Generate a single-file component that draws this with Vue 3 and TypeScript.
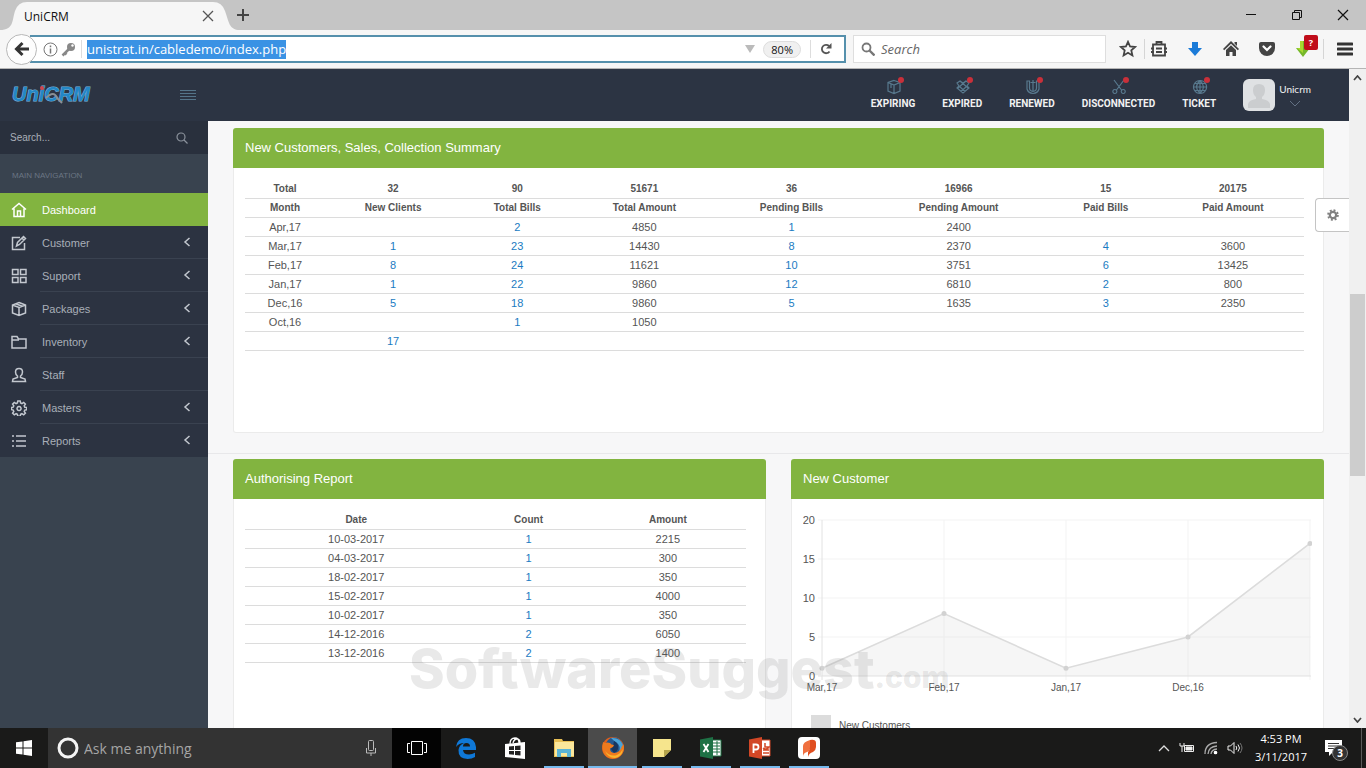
<script setup lang="ts">
import { ref } from 'vue'

interface NavItem { label: string; icon: string; children: boolean }
interface SummaryRow { month: string; cells: string[] }

const url = ref('unistrat.in/cabledemo/index.php')

const alerts = [
  { label: 'EXPIRING', icon: 'M8 1.5l6 2v8.5l-6 2.5-6-2.5V3.500zM2 3.500l6 2.500 6-2.500M8 6v8.500M5 5v4' },
  { label: 'EXPIRED', icon: 'M2 4l3-2 3 2 3-2 3 2-2 3 2 2-6 5-6-5 2-2zM5 2l8 7M11 2L3 9M4 7l6 5.500M12 7l-6 5.500' },
  { label: 'RENEWED', icon: 'M2 2h2.500v7q0 3 3.500 3.500 3.500-.5 3.500-3.500V2H14v8q-1 4-6 4.500-5-.5-6-4.500zM8 1v11.500M5.500 3.500h5' },
  { label: 'DISCONNECTED', icon: 'M3 1l7.500 10M13 1L5.500 11M3.800 10.500a2 2 0 1 0 .1 0zM12.200 10.500a2 2 0 1 0 .1 0z' },
  { label: 'TICKET', icon: 'M8 1.500a6.500 6.500 0 1 0 .1 0zM1.500 8h13M8 1.500v13M8 1.500q-7 6.500 0 13M8 1.500q7 6.500 0 13M3 4.500h10M3 11.500h10' },
]

const nav: NavItem[] = [
  { label: 'Customer', icon: 'M9 2.500H1.500v12h12V8M5.500 11l1-3.500L12.500 1.500l2 2-6 6zM11 3l2 2', children: true },
  { label: 'Support', icon: 'M1.500 1.500H7v5H1.500zM9.500 1.500H15v5H9.500zM1.500 9.500H7v5H1.500zM9.500 9.500H15v5H9.500z', children: true },
  { label: 'Packages', icon: 'M8 1.500l6.500 2.500v8L8 14.500 1.500 12V4zM1.500 4L8 6.500 14.500 4M8 6.500v8M4.700 2.700l6.500 2.600', children: true },
  { label: 'Inventory', icon: 'M1 14V2.500h5l1.500 2.500H15v9zM1 6h7', children: true },
  { label: 'Staff', icon: 'M8 1.500q-3.500 0-3.500 3.500 0 2.500 2 4v1.500l-4.500 1.500-.5 2.500h13l-.5-2.500-4.500-1.500V9q2-1.500 2-4 0-3.500-3.500-3.500z', children: false },
  { label: 'Masters', icon: 'M6.800 1h2.400l.4 2 1.300.6 1.800-1.200 1.700 1.700-1.200 1.700.6 1.400 2 .3v2.200l-2 .4-.6 1.400 1.200 1.700-1.700 1.700-1.800-1.200-1.300.6-.4 2H6.800l-.4-2-1.300-.6-1.800 1.200-1.700-1.700 1.200-1.700-.6-1.400-1.700-.4V7.500l1.700-.3.6-1.400-1.200-1.700 1.700-1.700 1.800 1.200L6.400 3zM8 6.500a2 2 0 1 0 .1 0z', children: true },
  { label: 'Reports', icon: 'M1 3h2M5 3h10M1 8h2M5 8h10M1 13h2M5 13h10', children: true },
]

const summaryCols = [80, 136, 112, 142, 152, 182, 112, 142]
const summaryTotal = 1058
const totals = ['Total', '32', '90', '51671', '36', '16966', '15', '20175']
const heads = ['Month', 'New Clients', 'Total Bills', 'Total Amount', 'Pending Bills', 'Pending Amount', 'Paid Bills', 'Paid Amount']
const summary: SummaryRow[] = [
  { month: 'Apr,17', cells: ['', '2', '4850', '1', '2400', '', ''] },
  { month: 'Mar,17', cells: ['1', '23', '14430', '8', '2370', '4', '3600'] },
  { month: 'Feb,17', cells: ['8', '24', '11621', '10', '3751', '6', '13425'] },
  { month: 'Jan,17', cells: ['1', '22', '9860', '12', '6810', '2', '800'] },
  { month: 'Dec,16', cells: ['5', '18', '9860', '5', '1635', '3', '2350'] },
  { month: 'Oct,16', cells: ['', '1', '1050', '', '', '', ''] },
  { month: '', cells: ['17', '', '', '', '', '', ''] },
]
const linked = [0, 1, 3, 5]

const authCols = [222, 122, 156]
const authorising = [
  ['10-03-2017', '1', '2215'],
  ['04-03-2017', '1', '300'],
  ['18-02-2017', '1', '350'],
  ['15-02-2017', '1', '4000'],
  ['10-02-2017', '1', '350'],
  ['14-12-2016', '2', '6050'],
  ['13-12-2016', '2', '1400'],
]

const values = [1, 8, 1, 5, 17]
const labels = ['Mar,17', 'Feb,17', 'Jan,17', 'Dec,16']
const px = (i: number) => 19 + i * 122
const py = (v: number) => 165 - v * 7.8
const line = values.map((v, i) => `${px(i)},${py(v)}`).join(' ')
const area = `${px(0)},${py(0)} ${line} ${px(4)},${py(0)}`
</script>

<template>
  <div class="desktop">
    <header class="browser">
      <div class="tabs">
        <div class="tab">
          <svg class="tab-shape" viewBox="0 0 240 30" preserveAspectRatio="none"><path d="M0 30C14 30 12 20 15 11Q18 2 27 2H213Q222 2 225 11C229 22 229 30 240 30z" fill="#f6f6f6" /></svg>
          <span class="tab-title">UniCRM</span>
          <button class="plain" aria-label="Close tab"><svg width="12" height="12" viewBox="0 0 12 12"><path d="M1 1l10 10M11 1L1 11" stroke="#555" stroke-width="1.300" /></svg></button>
        </div>
        <button class="plain newtab" aria-label="New tab"><svg width="14" height="14" viewBox="0 0 14 14"><path d="M7 1v12M1 7h12" stroke="#444" stroke-width="2" /></svg></button>
        <div class="window-buttons">
          <button class="plain" aria-label="Minimise"><svg width="12" height="12" viewBox="0 0 12 12"><path d="M1 5.500h10" stroke="#111" /></svg></button>
          <button class="plain" aria-label="Restore"><svg width="12" height="12" viewBox="0 0 12 12" fill="none" stroke="#111"><path d="M1.500 3.500h7v7h-7zM3.500 3.500v-2h7v7h-2" /></svg></button>
          <button class="plain" aria-label="Close"><svg width="12" height="12" viewBox="0 0 12 12"><path d="M1 1l10 10M11 1L1 11" stroke="#111" stroke-width="1.200" /></svg></button>
        </div>
      </div>
      <div class="toolbar">
        <button class="back" aria-label="Back"><svg width="16" height="16" viewBox="0 0 16 16"><path d="M8.500 2L2.500 8l6 6M3 8h12" fill="none" stroke="#333" stroke-width="3" /></svg></button>
        <div class="address">
          <svg width="15" height="15" viewBox="0 0 15 15"><circle cx="7.500" cy="7.500" r="6.500" fill="none" stroke="#777" /><path d="M7.500 6.500v5M7.500 3.500v1.700" stroke="#777" stroke-width="1.500" /></svg>
          <svg width="15" height="15" viewBox="0 0 15 15"><path d="M8 7L1.500 13.500M4 11l1.500 1.500" stroke="#888" stroke-width="2.500" /><circle cx="10" cy="5" r="4" fill="#888" /><circle cx="11.500" cy="3.500" r="1.200" fill="#fff" /></svg>
          <i class="rule" />
          <input v-model="url" class="url" aria-label="Address" />
          <span class="grow" />
          <svg width="10" height="8" viewBox="0 0 10 8"><path d="M0 0h10L5 8z" fill="#bbb" /></svg>
          <button class="zoom">80%</button>
          <i class="rule" />
          <button class="plain reload" aria-label="Reload"><svg width="12" height="12" viewBox="0 0 12 12"><path d="M9.500 8.500A4.200 4.200 0 1 1 9 3" fill="none" stroke="#555" stroke-width="1.800" /><path d="M11.500 0v5.500H6z" fill="#555" /></svg></button>
        </div>
        <div class="search">
          <svg width="14" height="14" viewBox="0 0 14 14"><circle cx="5.500" cy="5.500" r="4" fill="none" stroke="#777" stroke-width="1.800" /><path d="M8.500 8.500l5 5" stroke="#777" stroke-width="2.400" /></svg>
          <input placeholder="Search" aria-label="Web search" />
        </div>
        <div class="tools">
          <button class="plain" aria-label="Bookmark"><svg width="18" height="18" viewBox="0 0 18 18"><path d="M9 1.800l2.100 4.700 5 .5-3.800 3.400 1.100 5L9 12.800l-4.400 2.600 1.100-5L1.900 7l5-.5z" fill="none" stroke="#444" stroke-width="1.800" /></svg></button>
          <i class="sep near" />
          <button class="plain" aria-label="Bookmarks list"><svg width="16" height="16" viewBox="0 0 16 16"><path d="M2 3.500h12v11H2zM5.500 3V1h5v2M5 7.500h6M5 11h6M0 7.500h3M0 11h3M13 7.500h3M13 11h3" fill="none" stroke="#444" stroke-width="1.800" /></svg></button>
          <button class="plain" aria-label="Downloads"><svg width="16" height="16" viewBox="0 0 16 16"><path d="M5 1h6v6h4l-7 8-7-8h4z" fill="#1b7bd8" /></svg></button>
          <button class="plain" aria-label="Home"><svg width="16" height="16" viewBox="0 0 16 16"><path d="M8 0l8 8-1.200 1.200L8 2.800 1.200 9.200 0 8zM11.500 1H14v4l-2.500-2.500zM3 9l5-4.700L13 9v6H9.500v-4h-3v4H3z" fill="#444" /></svg></button>
          <button class="plain" aria-label="Pocket"><svg width="16" height="16" viewBox="0 0 16 16"><path d="M2 1h12q2 0 2 2v4a8 8 0 0 1-16 0V3q0-2 2-2z" fill="#444" /><path d="M4.500 5.500L8 9l3.500-3.500" fill="none" stroke="#fff" stroke-width="2.200" stroke-linecap="round" /></svg></button>
          <button class="plain helper" aria-label="Download helper"><svg width="16" height="16" viewBox="0 0 16 16"><path d="M5 0h6v7h4l-7 9-7-9h4z" fill="#76b82a" /><path d="M5 0h3v12L2 7h3z" fill="#a9d82f" /></svg><b>?</b></button>
          <i class="sep far" />
          <button class="plain" aria-label="Menu"><svg width="16" height="16" viewBox="0 0 16 16"><path d="M1 3h14M1 8h14M1 13h14" stroke="#333" stroke-width="3" stroke-linecap="round" /></svg></button>
        </div>
      </div>
    </header>

    <div class="page">
      <aside class="sidebar">
        <div class="brand">
          <svg class="logo" width="84" height="22" viewBox="0 0 84 22"><text x="2" y="17">UniCRM</text><path d="M36 14q8-8 11 0l5 5" /><circle cx="32" cy="4" r="2" /></svg>
          <button class="plain" aria-label="Toggle navigation"><svg width="16" height="12" viewBox="0 0 16 12"><path d="M0 1.500h16M0 4.500h16M0 7.500h16M0 10.500h16" stroke="#55758a" /></svg></button>
        </div>
        <form class="side-search" @submit.prevent>
          <input placeholder="Search..." aria-label="Search" />
          <button class="plain" aria-label="Search"><svg width="12" height="12" viewBox="0 0 12 12" fill="none" stroke="#8b929c" stroke-width="1.200"><circle cx="5" cy="5" r="4" /><path d="M8 8l3.500 3.500" /></svg></button>
        </form>
        <h3>MAIN NAVIGATION</h3>
        <nav>
          <a href="#" class="nav-item active">
            <svg width="16" height="16" viewBox="0 0 16 16"><path d="M1 7.500L8 1.500l7 6M3 6.500v8h10v-8M6.500 14V9h3v5" /></svg>
            <span>Dashboard</span>
          </a>
          <a v-for="n in nav" :key="n.label" href="#" class="nav-item">
            <svg width="16" height="16" viewBox="0 0 16 16"><path :d="n.icon" /></svg>
            <span>{{ n.label }}</span>
            <svg v-if="n.children" class="chev" width="8" height="12" viewBox="0 0 8 12"><path d="M6.500 1L2 5l4.500 4" /></svg>
          </a>
        </nav>
      </aside>

      <div class="content">
        <div class="topbar">
          <a v-for="a in alerts" :key="a.label" href="#" class="alert">
            <span class="alert-icon"><svg width="16" height="16" viewBox="0 0 16 16"><path :d="a.icon" /></svg><i /></span>
            <span>{{ a.label }}</span>
          </a>
          <div class="user">
            <svg width="32" height="32" viewBox="0 0 32 32"><rect width="32" height="32" rx="6" fill="#dfe1e3" /><path d="M10 11q0-6 6-6t6 6q0 5-3 7v2q7 1 8 5v4H5v-4q1-4 8-5v-2q-3-2-3-7z" fill="#cbcdcf" /></svg>
            <button class="plain account">Unicrm<svg width="12" height="8" viewBox="0 0 12 8"><path d="M1 1l5 5 5-5" fill="none" stroke="#627083" /></svg></button>
          </div>
        </div>

        <main>
          <section class="panel wide">
            <h2>New Customers, Sales, Collection Summary</h2>
            <div class="panel-body">
              <table>
                <colgroup><col v-for="(w, i) in summaryCols" :key="i" :style="{ width: (w / summaryTotal) * 100 + '%' }" /></colgroup>
                <thead>
                  <tr><th v-for="t in totals" :key="t">{{ t }}</th></tr>
                  <tr><th v-for="h in heads" :key="h">{{ h }}</th></tr>
                </thead>
                <tbody>
                  <tr v-for="r in summary" :key="r.month">
                    <td>{{ r.month }}</td>
                    <td v-for="(c, i) in r.cells" :key="i">
                      <a v-if="c && linked.includes(i)" href="#">{{ c }}</a>
                      <template v-else>{{ c }}</template>
                    </td>
                  </tr>
                </tbody>
              </table>
            </div>
          </section>

          <div class="pair">
            <section class="panel">
              <h2>Authorising Report</h2>
              <div class="panel-body">
                <table>
                  <colgroup><col v-for="(w, i) in authCols" :key="i" :style="{ width: w / 5 + '%' }" /></colgroup>
                  <thead><tr><th>Date</th><th>Count</th><th>Amount</th></tr></thead>
                  <tbody>
                    <tr v-for="r in authorising" :key="r[0]">
                      <td>{{ r[0] }}</td><td><a href="#">{{ r[1] }}</a></td><td>{{ r[2] }}</td>
                    </tr>
                  </tbody>
                </table>
              </div>
            </section>

            <section class="panel">
              <h2>New Customer</h2>
              <div class="panel-body chart-body">
                <svg class="chart" viewBox="0 0 509 190">
                  <g stroke="#f3f3f3">
                    <path v-for="v in [5, 10, 15, 20]" :key="v" :d="`M15 ${py(v)}H508`" />
                    <path v-for="i in [1, 2, 3, 4]" :key="i" :d="`M${px(i)} 9V169`" />
                  </g>
                  <path d="M19 9V169M15 165H508" stroke="#e2e2e2" fill="none" />
                  <polygon :points="area" fill="#dcdcdc" fill-opacity="0.250" />
                  <polyline :points="line" fill="none" stroke="#dcdcdc" stroke-width="1.600" />
                  <circle v-for="(v, i) in values" :key="i" :cx="px(i)" :cy="py(v)" r="2.500" fill="#d2d2d2" />
                  <text v-for="v in [0, 5, 10, 15, 20]" :key="v" class="tick" x="12" :y="py(v) + 4" text-anchor="end">{{ v }}</text>
                  <text v-for="(l, i) in labels" :key="l" class="month" :x="px(i)" y="180" text-anchor="middle">{{ l }}</text>
                </svg>
                <div class="legend"><i />New Customers</div>
              </div>
            </section>
          </div>
        </main>
      </div>

      <div class="scrollbar">
        <button class="plain" aria-label="Scroll up"><svg width="9" height="6" viewBox="0 0 9 6"><path d="M1 5l3.500-4L8 5" fill="none" stroke="#444" stroke-width="1.700" /></svg></button>
        <span class="before" /><span class="thumb" /><span class="after" />
        <button class="plain" aria-label="Scroll down"><svg width="9" height="6" viewBox="0 0 9 6"><path d="M1 1l3.500 4L8 1" fill="none" stroke="#444" stroke-width="1.700" /></svg></button>
      </div>

      <button class="settings" aria-label="Settings"><svg width="12" height="12" viewBox="0 0 16 16" fill="none" stroke="#808080"><circle cx="8" cy="8" r="4.200" stroke-width="3" /><circle cx="8" cy="8" r="6.500" stroke-width="2.500" stroke-dasharray="2.600 2.500" /></svg></button>
      <div class="watermark">SoftwareSuggest<small>.com</small></div>
    </div>

    <footer class="taskbar">
      <button class="plain start" aria-label="Start"><svg width="16" height="16" viewBox="0 0 16 16"><path d="M0 2.300L6.500 1.400V7.500H0zM7.500 1.200L16 0v7.500H7.500zM0 8.500h6.500v6.100L0 13.700zM7.500 8.500H16V16l-8.500-1.200z" fill="#fff" /></svg></button>
      <div class="ask">
        <svg width="22" height="22" viewBox="0 0 22 22"><circle cx="11" cy="11" r="9" fill="none" stroke="#f4f4f4" stroke-width="3" /></svg>
        <input placeholder="Ask me anything" aria-label="Ask me anything" />
        <svg width="12" height="18" viewBox="0 0 12 18" fill="none" stroke="#bbb"><rect x="3.500" y="1.500" width="5" height="10" rx="1" /><path d="M1.500 9v5h9V9M6 14v3" /></svg>
      </div>
      <button class="plain app dark" aria-label="Task view"><svg width="22" height="16" viewBox="0 0 22 16" fill="none" stroke="#fff"><path d="M5.500 1.500h11v13h-11zM4 3.500H1.500v9H4M18 3.500h2.500v9H18" /></svg></button>
      <button class="plain app" aria-label="Edge"><svg width="22" height="22" viewBox="0 0 22 22"><path d="M1 10Q2 1 11 1q9 0 10 9v3H8q.5 4.500 6 4.500 3 0 6-1.700V20q-3 2-7.500 2Q3 21.500 3.500 13 4 8 9 6 4 6 1 10zM8 9.500h7Q15 6 11.500 6T8 9.500z" fill="#0f78d7" /></svg></button>
      <button class="plain app" aria-label="Store"><svg width="22" height="24" viewBox="0 0 22 24"><path d="M1 8l20-2v17l-20-2z" fill="#fff" /><path d="M6 8q0-6 5-6 4 0 4 5M9 7q1-4 4-4 3 0 3 4" fill="none" stroke="#fff" stroke-width="1.300" /><path d="M5 10.500l5-.5v4H5zM11 10l5.500-.5V14H11zM5 15h5v3.700l-5-.5zM11 15h5.500v4.500l-5.500-.6z" fill="#222" /></svg></button>
      <button class="plain app open" aria-label="File Explorer"><svg width="22" height="20" viewBox="0 0 22 20"><path d="M1 1h8l1 2h11v16H1z" fill="#e8bf55" /><path d="M2 4h19v14H2z" fill="#fbe79b" /><path d="M4 19v-8h14v8h-4v-4H8v4z" fill="#5bb4d6" /></svg></button>
      <button class="plain app open current" aria-label="Firefox"><svg width="24" height="24" viewBox="0 0 24 24"><circle cx="12" cy="12" r="11" fill="#e0601c" /><circle cx="13" cy="10" r="8.500" fill="#23578f" /><path d="M10 2q9-1 12 7-1 5-4 7 2-6-2-9-3-2-6-5z" fill="#4aa3d8" /><path d="M13 5q5 2 4 8-1 3-4 4l-3-4 2-3z" fill="#17365f" /><path d="M2 6l2 1q2-1 5 0 1 2 4 2l-1 2-3 1.500q0 4 4 4.500 6 0 8-7 2-1 1-3 3 8-3 13-7 5-13 1T2 6z" fill="#ee7a1e" /><path d="M4 15q5 6 12 4 4-2 6-6-1 8-8 9-7 0-10-7z" fill="#f9b62e" /></svg></button>
      <button class="plain app open" aria-label="Sticky Notes"><svg width="18" height="18" viewBox="0 0 18 18"><path d="M0 0h18v11l-7 7H0z" fill="#f6e58d" /><path d="M11 18v-7h7z" fill="#b5a44b" /></svg></button>
      <button class="plain app open" aria-label="Excel"><svg width="22" height="22" viewBox="0 0 22 22"><path d="M12 3h9v16h-9z" fill="#fff" stroke="#1e7145" /><path d="M13 6h7M13 9h7M13 12h7M13 15h7M17 4v14" stroke="#1e7145" /><path d="M0 2.500L13 0v22L0 19.500z" fill="#1e7145" /><path d="M3.500 7l5 8M8.500 7l-5 8" stroke="#fff" stroke-width="1.800" /></svg></button>
      <button class="plain app open" aria-label="PowerPoint"><svg width="22" height="22" viewBox="0 0 22 22"><path d="M12 3h9v16h-9z" fill="#fff" stroke="#d24726" /><path d="M14 13h6M14 16h6M16 6v4h4a4 4 0 0 1-6 1" stroke="#d24726" stroke-width="1.500" fill="none" /><path d="M0 2.500L13 0v22L0 19.500z" fill="#d24726" /><path d="M4.500 16V7.500h2.500a2.300 2.300 0 0 1 0 5H4.500" fill="none" stroke="#fff" stroke-width="1.800" /></svg></button>
      <button class="plain app open" aria-label="Nitro"><svg width="24" height="24" viewBox="0 0 24 24"><rect x="1" y="1" width="22" height="22" rx="4" fill="#fff" /><path d="M6 10q0-4 7-6v9q0 2-3 3-4 1-4 5z" fill="#f0703f" /><path d="M13 4q6-1 6 3v4q0 3-3 5-4 1-5 5v-5q2-2 2-5z" fill="#e04e1f" /></svg></button>
      <span class="grow" />
      <div class="tray">
        <svg width="12" height="8" viewBox="0 0 12 8"><path d="M1 7l5-5 5 5" fill="none" stroke="#ddd" stroke-width="1.300" /></svg>
        <svg width="16" height="12" viewBox="0 0 16 12" fill="none" stroke="#eee"><path d="M1 1v3h4V1M3 4v6M5.500 3.500h9v6h-9z" /><path d="M7 5h6v3H7z" fill="#eee" /></svg>
        <svg width="14" height="14" viewBox="0 0 14 14" fill="none" stroke="#aaa" stroke-width="1.300"><path d="M1 13Q1 2 13 1.500M4 13Q4.500 5.500 13 5M7 13q.5-4.500 6-5" /><circle cx="11.500" cy="11.500" r="1.200" fill="#fff" stroke="#fff" /></svg>
        <svg width="16" height="14" viewBox="0 0 16 14" fill="none" stroke="#eee"><path d="M1 5h2.500L7 1.500v11L3.500 9H1z" /><path d="M9 5q1.500 2 0 4M11 3.500q3 3.500 0 7" /><path d="M13 2q4 5 0 10" stroke="#777" /></svg>
        <div class="clock"><span>4:53 PM</span><span>3/11/2017</span></div>
        <button class="plain notice" aria-label="Notifications"><svg width="18" height="18" viewBox="0 0 18 18"><path d="M0 1h17v12h-9l-4 4v-4H0z" fill="#fff" /><path d="M3 4.500h11M3 7h11M3 9.500h7" stroke="#333" /></svg><b>3</b></button>
      </div>
      <i class="show-desktop" />
    </footer>
  </div>
</template>

<style>
body { background: #f7f7f8; overflow: hidden; }
</style>

<style scoped>
* { box-sizing: border-box; }
.desktop { display: flex; flex-direction: column; height: 100vh; font-family: "Liberation Sans", Arial, sans-serif; font-size: 11px; color: #555; }
.plain { background: none; border: 0; padding: 0; margin: 0; font: inherit; color: inherit; display: flex; align-items: center; justify-content: center; }
input { border: 0; outline: 0; background: none; padding: 0; margin: 0; min-width: 0; }
a { text-decoration: none; color: inherit; }
svg { flex: none; display: block; }
.grow { flex: 1; }

.browser { font-family: "Open Sans", "Noto Sans", sans-serif; color: #111; }
.tabs { display: flex; align-items: center; height: 30px; background: #c5c5c5; }
.tab { position: relative; width: 240px; height: 30px; display: flex; align-items: center; justify-content: space-between; padding: 2px 26px 0 24px; font-size: 12px; }
.tab-shape { position: absolute; inset: 0; width: 100%; height: 100%; }
.tab-title, .tab button { position: relative; }
.newtab { margin-left: -4px; }
.window-buttons { display: flex; gap: 34px; margin-left: auto; padding-right: 17px; }
.toolbar { display: flex; align-items: center; height: 39px; padding: 0 13px 0 6px; background: #f6f6f6; border-bottom: 1px solid #b5b5b5; }
.back { width: 31px; height: 31px; padding: 0; border: 1px solid #b8b8b8; border-radius: 50%; background: #fdfdfd; display: flex; align-items: center; justify-content: center; z-index: 1; }
.address { flex: 1; display: flex; align-items: center; height: 28px; margin-left: -7px; padding: 0 8px 0 10px; border: 2px solid #5590ac; border-left: 0; background: #fff; }
.address > svg:first-child { margin: 0 3px 0 3px; }
.rule { width: 1px; height: 18px; background: #ddd; margin: 0 5px; }
.url { field-sizing: content; height: 19px; background: #3a92e4; color: #fff; font: 13px "Open Sans", "Noto Sans", sans-serif; }
.zoom { border: 1px solid #ddd; border-radius: 9px; background: #f0f0f0; height: 17px; padding: 0 7px; margin: 0 4px 0 8px; font: 11px/15px "Open Sans", sans-serif; color: #111; }
.reload { margin: 0 4px; }
.search { display: flex; align-items: center; gap: 6px; width: 253px; height: 28px; margin: 0 13px 0 7px; padding: 0 7px; border: 1px solid #dedede; background: #fff; }
.search input { flex: 1; font: italic 13px "Open Sans", sans-serif; }
.search input::placeholder { color: #666; opacity: 1; }
.tools { display: flex; align-items: center; gap: 20px; }
.sep { width: 1px; height: 20px; background: #d5d5d5; }
.near { margin: 0 -14px 0 -13px; }
.far { margin: 0 -7px 0 -8px; }
.helper { position: relative; }
.helper b { position: absolute; left: 9px; top: -6px; width: 14px; height: 15px; background: #c00d1a; border-radius: 2px; color: #fff; font-size: 9px; line-height: 15px; }

.page { position: relative; flex: 1; min-height: 0; display: flex; overflow: hidden; background: #f7f7f8; }
.sidebar { width: 208px; flex: none; background: #39434f; color: #a9afb8; }
.brand { display: flex; align-items: center; justify-content: space-between; height: 52px; padding: 0 12px 0 10px; background: #2c3443; }
.logo text { font: italic bold 20px "Liberation Sans", sans-serif; fill: #2387c6; stroke: #7db5da; stroke-width: 1px; paint-order: stroke; }
.logo path { fill: none; stroke: #8a8f96; stroke-width: 2; }
.logo circle { fill: #d4444c; }
.side-search { display: flex; align-items: center; justify-content: space-between; height: 33px; padding: 0 20px 0 10px; background: #29303d; }
.side-search input { font: 10px "Liberation Sans", sans-serif; color: #a9afb8; }
.side-search input::placeholder { color: #a9afb8; opacity: 1; }
h3 { margin: 0; height: 39px; padding: 6px 12px 0; font-size: 8px; line-height: 32px; font-weight: 400; color: #6b7684; }
nav { background: #2c3341; }
.nav-item { position: relative; display: flex; align-items: center; gap: 15px; height: 33px; padding: 0 17px 0 11px; }
.nav-item svg { fill: none; stroke: #c3c8cf; stroke-width: 1.5; }
.nav-item span { flex: 1; }
.nav-item:not(.active)::after { content: ""; position: absolute; left: 40px; right: 0; bottom: 0; height: 1px; background: #3a4250; }
.nav-item:last-child::after { display: none; }
.active { background: #82b440; color: #fff; }
.nav-item.active svg { stroke: #fff; }

.content { flex: 1; min-width: 0; }
.topbar { display: flex; justify-content: flex-end; align-items: center; gap: 27px; height: 52px; padding-right: 38px; background: #2c3443; color: #f2f2f2; }
.alert { display: flex; flex-direction: column; align-items: center; gap: 2px; font: bold 10px/14px Roboto, sans-serif; }
.alert-icon { position: relative; margin-left: 2px; }
.alert-icon path { fill: none; stroke: #58798e; stroke-width: 1.2; }
.alert-icon i { position: absolute; right: -2px; top: -2px; width: 6px; height: 6px; border-radius: 50%; background: #c9303a; }
.user { display: flex; align-items: center; gap: 4px; }
.account { flex-direction: column; gap: 5px; font: 10px/12px Lato, sans-serif; }

main { padding: 7px 0 0; }
.panel { min-width: 0; }
.wide { margin: 0 25px 20px; }
.pair { display: grid; grid-template-columns: 1fr 1fr; gap: 25px; padding: 5px 25px 0; border-top: 1px solid #e8e8ea; }
h2 { margin: 0; height: 40px; padding: 0 12px; background: #82b440; color: #fff; font-size: 13px; line-height: 40px; font-weight: 400; border-radius: 3px 3px 0 0; }
.panel-body { min-height: 265px; padding: 12px 19px 20px 11px; background: #fff; border: 1px solid #ebebeb; border-top: 0; border-radius: 0 0 3px 3px; }
table { width: 100%; table-layout: fixed; border-collapse: separate; border-spacing: 0; text-align: center; }
th, td { height: 19px; padding: 0; line-height: 18px; border-bottom: 1px solid #dcdcdc; }
th { font-size: 10px; }
td a { color: #1a7bc2; }
.chart-body { padding-right: 11px; }
.chart { width: 100%; }
.chart text { fill: #555; }
.tick { font-size: 11px; }
.month { font-size: 10px; }
.legend { display: flex; align-items: center; gap: 8px; margin: 14px 0 0 8px; font-size: 10px; }
.legend i { width: 20px; height: 20px; background: #dcdcdc; }

.scrollbar { width: 17px; flex: none; display: flex; flex-direction: column; background: #f0f0f0; }
.scrollbar button { height: 17px; }
.before { flex: 208; }
.thumb { flex: 182; margin: 0 1px; background: #cdcdcd; }
.after { flex: 235; }
.settings { position: absolute; right: 17px; top: 129px; width: 34px; height: 34px; padding: 0; display: flex; align-items: center; justify-content: center; background: #fff; border: 1px solid #c4c4c4; border-right: 0; border-radius: 4px 0 0 4px; }
.watermark { position: absolute; left: 409px; top: 570px; font: 800 54px/60px Inter, sans-serif; color: rgba(110, 110, 110, .15); pointer-events: none; white-space: nowrap; }
.watermark small { font-size: 30px; }

.taskbar { display: flex; height: 40px; background: #1a1a19; color: #fff; font-family: "Open Sans", "Noto Sans", sans-serif; }
.start { width: 48px; }
.ask { display: flex; align-items: center; gap: 5px; width: 344px; padding: 0 15px 0 9px; background: #333; }
.ask input { flex: 1; font: 14px "Open Sans", sans-serif; color: #aaa; }
.ask input::placeholder { color: #a5a5a5; opacity: 1; }
.app { width: 49px; }
.dark { background: #030303; }
.open { background: linear-gradient(#76b9ed, #76b9ed) bottom / 40px 2px no-repeat; }
.current { background: linear-gradient(#76b9ed, #76b9ed) bottom / 100% 2px no-repeat, #4b4b4b; }
.tray { display: flex; align-items: center; gap: 9px; padding-right: 18px; }
.clock { display: flex; flex-direction: column; align-items: center; width: 58px; font-size: 11px; line-height: 18px; }
.notice { position: relative; margin-left: 6px; }
.notice b { position: absolute; left: 7px; top: 6px; width: 16px; height: 16px; border: 1px solid #888; border-radius: 50%; background: #333; font-size: 10px; line-height: 14px; }
.show-desktop { width: 1px; margin-right: 4px; background: #5a5a5a; }
</style>
